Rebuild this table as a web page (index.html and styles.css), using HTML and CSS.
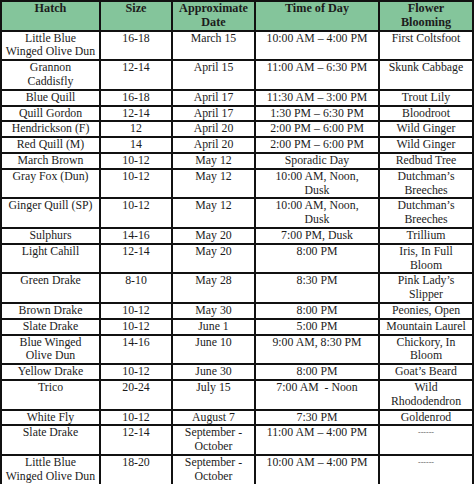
FILE: index.html
```html
<!DOCTYPE html>
<html>
<head>
<meta charset="utf-8">
<link rel="stylesheet" href="styles.css">
</head>
<body>
<table class="hatch-table">
  <colgroup>
    <col class="c-hatch"><col class="c-size"><col class="c-date"><col class="c-time"><col class="c-flower">
  </colgroup>
  <thead>
    <tr><th>Hatch</th><th>Size</th><th>Approximate<br>Date</th><th>Time of Day</th><th>Flower<br>Blooming</th></tr>
  </thead>
  <tbody>
    <tr><td>Little Blue<br>Winged Olive Dun</td><td>16-18</td><td>March 15</td><td>10:00 AM – 4:00 PM</td><td>First Coltsfoot</td></tr>
    <tr><td>Grannon<br>Caddisfly</td><td>12-14</td><td>April 15</td><td>11:00 AM – 6:30 PM</td><td>Skunk Cabbage</td></tr>
    <tr><td>Blue Quill</td><td>16-18</td><td>April 17</td><td>11:30 AM – 3:00 PM</td><td>Trout Lily</td></tr>
    <tr><td>Quill Gordon</td><td>12-14</td><td>April 17</td><td>1:30 PM – 6:30 PM</td><td>Bloodroot</td></tr>
    <tr><td>Hendrickson (F)</td><td>12</td><td>April 20</td><td>2:00 PM – 6:00 PM</td><td>Wild Ginger</td></tr>
    <tr><td>Red Quill (M)</td><td>14</td><td>April 20</td><td>2:00 PM – 6:00 PM</td><td>Wild Ginger</td></tr>
    <tr><td>March Brown</td><td>10-12</td><td>May 12</td><td>Sporadic Day</td><td>Redbud Tree</td></tr>
    <tr><td>Gray Fox (Dun)</td><td>10-12</td><td>May 12</td><td>10:00 AM, Noon,<br>Dusk</td><td>Dutchman’s<br>Breeches</td></tr>
    <tr><td>Ginger Quill (SP)</td><td>10-12</td><td>May 12</td><td>10:00 AM, Noon,<br>Dusk</td><td>Dutchman’s<br>Breeches</td></tr>
    <tr><td>Sulphurs</td><td>14-16</td><td>May 20</td><td>7:00 PM, Dusk</td><td>Trillium</td></tr>
    <tr><td>Light Cahill</td><td>12-14</td><td>May 20</td><td>8:00 PM</td><td>Iris, In Full<br>Bloom</td></tr>
    <tr><td>Green Drake</td><td>8-10</td><td>May 28</td><td>8:30 PM</td><td>Pink Lady’s<br>Slipper</td></tr>
    <tr><td>Brown Drake</td><td>10-12</td><td>May 30</td><td>8:00 PM</td><td>Peonies, Open</td></tr>
    <tr><td>Slate Drake</td><td>10-12</td><td>June 1</td><td>5:00 PM</td><td>Mountain Laurel</td></tr>
    <tr><td>Blue Winged<br>Olive Dun</td><td>14-16</td><td>June 10</td><td>9:00 AM, 8:30 PM</td><td>Chickory, In<br>Bloom</td></tr>
    <tr><td>Yellow Drake</td><td>10-12</td><td>June 30</td><td>8:00 PM</td><td>Goat’s Beard</td></tr>
    <tr><td>Trico</td><td>20-24</td><td>July 15</td><td>7:00 AM&nbsp; - Noon</td><td>Wild<br>Rhododendron</td></tr>
    <tr><td>White Fly</td><td>10-12</td><td>August 7</td><td>7:30 PM</td><td>Goldenrod</td></tr>
    <tr><td>Slate Drake</td><td>12-14</td><td>September -<br>October</td><td>11:00 AM – 4:00 PM</td><td class="dashes">------</td></tr>
    <tr><td>Little Blue<br>Winged Olive Dun</td><td>18-20</td><td>September -<br>October</td><td>10:00 AM – 4:00 PM</td><td class="dashes">------</td></tr>
  </tbody>
</table>
</body>
</html>
```

FILE: styles.css
```css
html, body {
  margin: 0;
  padding: 0;
  background: #ffffff;
}

.hatch-table {
  border-collapse: collapse;
  table-layout: fixed;
  width: 472px;
  font-family: "Liberation Serif", "Times New Roman", serif;
  font-size: 11.8px;
  line-height: 13.8px;
  color: #1c1c1c;
}

.c-hatch { width: 99px; }
.c-size { width: 72px; }
.c-date { width: 83px; }
.c-time { width: 124px; }
.c-flower { width: 94px; }

.hatch-table th,
.hatch-table td {
  border: 2px solid #111111;
  padding: 0;
  text-align: center;
  vertical-align: top;
  white-space: nowrap;
  overflow: hidden;
}

.hatch-table th {
  background: #84c59b;
  font-weight: bold;
  font-size: 12.2px;
  height: 27.6px;
}

.hatch-table td.dashes {
  font-size: 8px;
  color: #666666;
}
```
